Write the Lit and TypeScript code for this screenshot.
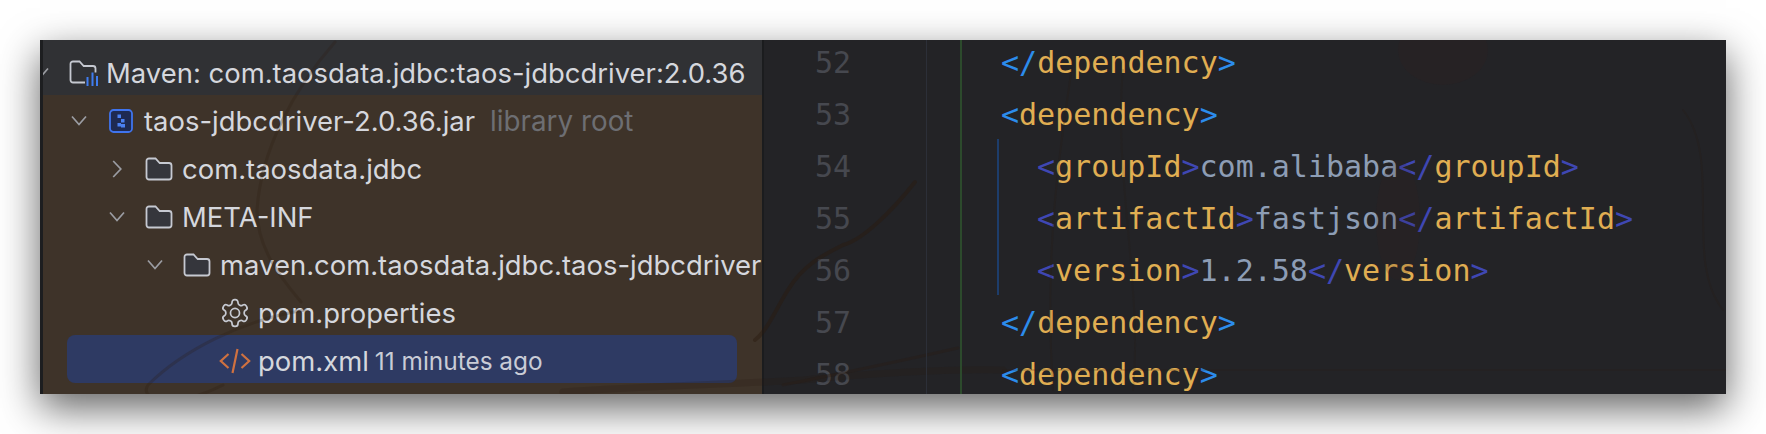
import { LitElement, html, css, svg } from "lit";
import { customElement } from "lit/decorators.js";

const chevDown = html`<svg class="chev" width="16" height="12" viewBox="0 0 16 12"><path d="M1 1.5 8 9.5 15 1.5" fill="none" stroke="#9b9da3" stroke-width="1.7"/></svg>`;
const chevRight = html`<svg class="chev right" width="10" height="18" viewBox="0 0 10 18"><path d="M1.2 1 8.8 9 1.2 17" fill="none" stroke="#9b9da3" stroke-width="1.7"/></svg>`;
const folderD = "M1.5 4a2.5 2.5 0 0 1 2.5-2.5h6.5l4.2 4.5h9.3a2.5 2.5 0 0 1 2.5 2.5v11.5a2.5 2.5 0 0 1-2.5 2.5h-20a2.5 2.5 0 0 1-2.5-2.5z";
const folder = html`<svg width="28" height="24" viewBox="0 0 28 24"><path d="${folderD}" fill="#35363c" stroke="#c6c9d1" stroke-width="1.8"/></svg>`;
const mavenFolder = html`<svg width="29" height="26" viewBox="0 0 29 26"><path d="M16 22.5H4a2.5 2.5 0 0 1-2.500-2.500V4a2.500 2.500 0 0 1 2.500-2.500h6.500l4.200 4.500h9.300a2.500 2.500 0 0 1 2.500 2.500v4" fill="none" stroke="#c6c9d1" stroke-width="1.800"/><path d="M18.500 17v9M23.500 12.500V26M28 16v10" stroke="#3f7df0" stroke-width="2"/></svg>`;
const jar = html`<svg width="24" height="24" viewBox="0 0 24 24"><rect x="1" y="1" width="22" height="22" rx="3.500" fill="#1e2a52" stroke="#3f74ee" stroke-width="1.800"/><path d="M8.500 5.500h3.500V9H8.500zM12 10h3.500v3.500H12zM8.500 14H12v3.500H8.500zM12 15h4v3.500h-4z" fill="#4a80f2"/></svg>`;
const gear = html`<svg width="32" height="32" viewBox="0 0 24 24" fill="none" stroke="#c6c9d1" stroke-width="1.300"><path d="M12.220 2h-.44a2 2 0 0 0-2 2v.18a2 2 0 0 1-1 1.730l-.43.25a2 2 0 0 1-2 0l-.15-.08a2 2 0 0 0-2.730.73l-.22.38a2 2 0 0 0 .73 2.730l.15.1a2 2 0 0 1 1 1.720v.51a2 2 0 0 1-1 1.740l-.15.09a2 2 0 0 0-.73 2.730l.22.38a2 2 0 0 0 2.730.73l.15-.08a2 2 0 0 1 2 0l.43.25a2 2 0 0 1 1 1.730V20a2 2 0 0 0 2 2h.44a2 2 0 0 0 2-2v-.18a2 2 0 0 1 1-1.730l.43-.25a2 2 0 0 1 2 0l.15.08a2 2 0 0 0 2.730-.73l.22-.39a2 2 0 0 0-.73-2.730l-.15-.08a2 2 0 0 1-1-1.740v-.5a2 2 0 0 1 1-1.740l.15-.09a2 2 0 0 0 .73-2.730l-.22-.38a2 2 0 0 0-2.730-.73l-.15.08a2 2 0 0 1-2 0l-.43-.25a2 2 0 0 1-1-1.730V4a2 2 0 0 0-2-2z"/><circle cx="12" cy="12" r="3.400"/></svg>`;
const xml = html`<svg width="32" height="26" viewBox="0 0 32 26" fill="none" stroke="#cf7140" stroke-width="2.200"><path d="M9.500 6 1.800 13 9.500 20M22.500 6 30.200 13 22.500 20M18.500 1 13.500 25"/></svg>`;

interface Row { depth: number; chev?: "d" | "r"; icon: unknown; name: string; hint?: string; hintClass?: string; sel?: boolean; }
const rows: Row[] = [
  { depth: 1, chev: "d", icon: jar, name: "taos-jdbcdriver-2.0.36.jar", hint: "library root", hintClass: "dim" },
  { depth: 2, chev: "r", icon: folder, name: "com.taosdata.jdbc" },
  { depth: 2, chev: "d", icon: folder, name: "META-INF" },
  { depth: 3, chev: "d", icon: folder, name: "maven.com.taosdata.jdbc.taos-jdbcdriver" },
  { depth: 4, icon: gear, name: "pom.properties" },
  { depth: 4, icon: xml, name: "pom.xml", hint: "11 minutes ago", hintClass: "time", sel: true },
];

type Seg = [string, string];
const B = "b", N = "n", T = "t";
const code: { num: number; indent: boolean; segs: Seg[] }[] = [
  { num: 52, indent: false, segs: [["</", B], ["dependency", N], [">", B]] },
  { num: 53, indent: false, segs: [["<", B], ["dependency", N], [">", B]] },
  { num: 54, indent: true, segs: [["<", B], ["groupId", N], [">", B], ["com.alibaba", T], ["</", B], ["groupId", N], [">", B]] },
  { num: 55, indent: true, segs: [["<", B], ["artifactId", N], [">", B], ["fastjson", T], ["</", B], ["artifactId", N], [">", B]] },
  { num: 56, indent: true, segs: [["<", B], ["version", N], [">", B], ["1.2.58", T], ["</", B], ["version", N], [">", B]] },
  { num: 57, indent: false, segs: [["</", B], ["dependency", N], [">", B]] },
  { num: 58, indent: false, segs: [["<", B], ["dependency", N], [">", B]] },
];

const scratches = svg`
  <g fill="none" stroke="#2a1a10" stroke-width="3" stroke-linecap="round">
    <path stroke-opacity=".25" d="M292 2C250 50 218 110 214 170C214 210 240 240 258 262"/>
    <path stroke-opacity=".25" d="M262 270C200 280 140 310 105 345C95 360 130 370 180 345"/>
    <path stroke-opacity=".22" stroke-width="7" d="M520 352C600 346 700 344 760 340C800 336 900 328 960 330"/>
    <path d="M872 142C850 170 820 200 800 205C780 215 760 225 745 250C735 265 725 290 712 300" stroke-opacity=".45" stroke-width="4"/>
    <path d="M740 345C790 335 840 325 915 308" stroke-opacity=".3"/>
    <path d="M960 330H1686" stroke-opacity=".18" stroke-width="2"/>
    <path d="M1030 20C1020 90 1000 200 1010 350" stroke-opacity=".2" stroke-width="2"/>
    <path d="M1080 30C1070 130 1100 250 1090 350" stroke-opacity=".15" stroke-width="2"/>
    <path d="M1640 70C1680 120 1640 220 1680 270" stroke-opacity=".2" stroke-width="2"/>
  </g>
  <ellipse cx="1355" cy="180" rx="22" ry="60" fill="#3a1c1c" fill-opacity=".16"/>
  <ellipse cx="1400" cy="10" rx="45" ry="35" fill="#3a1c1c" fill-opacity=".14"/>
`;

@customElement("app-root")
export class AppRoot extends LitElement {
  static styles = css`
    :host { display: block; height: 434px; overflow: hidden; background: #fff; padding: 40px 40px 0; box-sizing: border-box; }
    .window { position: relative; display: flex; height: 354px; box-shadow: 0 14px 38px rgba(0,0,0,.62); background: #232326; }
    .window::before { content: ""; position: absolute; left: 0; top: 0; bottom: 0; width: 3px; background: #1d1e20; }
    .content { position: relative; display: flex; flex: 1; min-width: 0; margin-left: 3px; }
    .tree { width: 719px; flex: none; overflow: hidden; background: #3e3329; font: 27.45px/48px Inter, "Noto Sans", sans-serif; color: #d5d7dd; white-space: nowrap; }
    .sticky { height: 55px; background: #303134; display: flex; align-items: center; padding-top: 11px; box-sizing: border-box; }
    .body { padding-top: 2px; }
    .row { display: flex; align-items: center; height: 48px; position: relative; }
    .row.sel::before { content: ""; position: absolute; left: 24px; width: 670px; top: -2px; bottom: 2px; background: #2e3a63; border-radius: 8px; }
    .cell { display: flex; align-items: center; position: relative; }
    .slot { width: 36px; height: 48px; flex: none; display: flex; align-items: center; }
    .chev.right { margin-left: 3px; }
    .icon { width: 28px; margin-right: 9px; flex: none; display: flex; align-items: center; justify-content: center; }
    .icon svg { flex: none; }
    .dim { color: #6d6e72; margin-left: 15px; font-size: 27.8px; }
    .time { color: #c9ccd6; font-size: 24.4px; margin-left: 6px; }
    .divider { width: 2px; flex: none; background: #1b1c1e; }
    .editor { flex: 1; overflow: hidden; background: #232326; }
    .lines { margin-top: -3px; font: 30px/52px "DejaVu Sans Mono", monospace; }
    .line { display: flex; height: 52px; }
    .num { width: 87px; text-align: right; color: #46484f; flex: none; }
    .src { margin-left: 150px; white-space: pre; }
    .src.in { margin-left: 186px; }
    .n { color: #e0ae52; }
    .t { color: #8d9db5; }
    .b { color: #2c8cec; }
    .in .b { color: #3f47b3; }
    .guide { position: absolute; top: 0; bottom: 0; }
    .g1 { left: 883px; width: 1px; background: #2c2f38; }
    .g2 { left: 917px; width: 2px; background: #2c4a2c; }
    .g3 { left: 954px; width: 2px; top: 99px; bottom: 99px; background: #1d3d6b; }
    .art { position: absolute; inset: 0; width: 100%; height: 100%; pointer-events: none; }
  `;

  private renderRow(r: Row) {
    const chev = r.chev === "d" ? chevDown : r.chev === "r" ? chevRight : "";
    return html`<div class="row ${r.sel ? "sel" : ""}">
      <div class="cell" style="margin-left:${r.depth * 38 - 10}px">
        <span class="slot">${chev}</span>
        <span class="icon">${r.icon}</span>
        <span>${r.name}</span>
        ${r.hint ? html`<span class=${r.hintClass ?? ""}>${r.hint}</span>` : ""}
      </div>
    </div>`;
  }

  render() {
    return html`<div class="window">
      <div class="content">
        <div class="tree">
          <div class="sticky">
            <div class="cell" style="margin-left:-10px">
              <span class="slot">${chevDown}</span>
              <span class="icon">${mavenFolder}</span>
              <span>Maven: com.taosdata.jdbc:taos-jdbcdriver:2.0.36</span>
            </div>
          </div>
          <div class="body">${rows.map((r) => this.renderRow(r))}</div>
        </div>
        <div class="divider"></div>
        <div class="editor">
          <div class="lines">
            ${code.map((l) => html`<div class="line"><span class="num">${l.num}</span><span class="src ${l.indent ? "in" : ""}">${l.segs.map(([t, c]) => html`<span class=${c}>${t}</span>`)}</span></div>`)}
          </div>
        </div>
        <svg class="art" viewBox="0 0 1683 354" preserveAspectRatio="none">${scratches}</svg>
        <div class="guide g1"></div>
        <div class="guide g2"></div>
        <div class="guide g3"></div>
      </div>
    </div>`;
  }
}
